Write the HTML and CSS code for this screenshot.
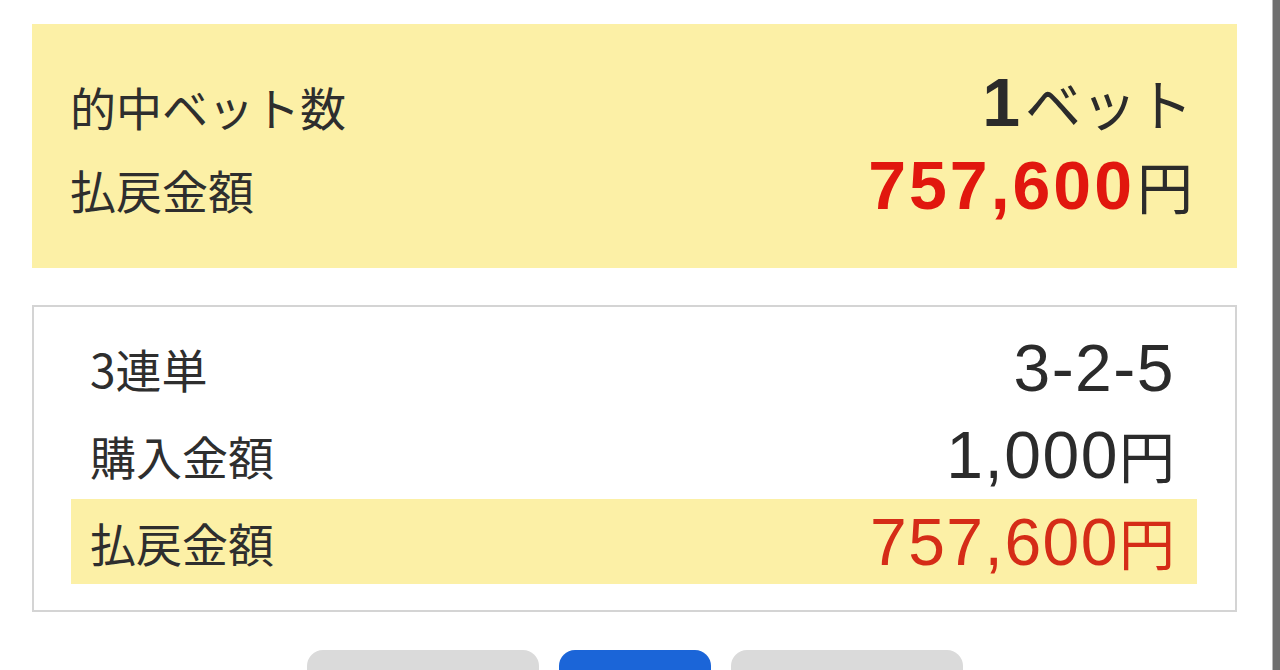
FILE: index.html
```html
<!DOCTYPE html>
<html lang="ja">
<head>
<meta charset="utf-8">
<title>的中結果</title>
<link rel="stylesheet" href="styles.css">
</head>
<body>
<div class="page">
  <main class="main">
    <section class="summary">
      <div class="row">
        <span class="label">的中ベット数</span>
        <span class="value"><b class="num-bold">1</b><span class="jp-big">ベット</span></span>
      </div>
      <div class="row">
        <span class="label">払戻金額</span>
        <span class="value"><b class="num-bold red">757,600</b><span class="jp-big">円</span></span>
      </div>
    </section>

    <section class="detail">
      <div class="drow">
        <span class="label">3連単</span>
        <span class="value"><span class="num">3-2-5</span></span>
      </div>
      <div class="drow">
        <span class="label">購入金額</span>
        <span class="value"><span class="num">1,000</span><span class="jp-big">円</span></span>
      </div>
      <div class="drow hl">
        <span class="label">払戻金額</span>
        <span class="value red2"><span class="num">757,600</span><span class="jp-big">円</span></span>
      </div>
    </section>

    <nav class="buttons">
      <button class="btn gray"></button>
      <button class="btn blue"></button>
      <button class="btn gray"></button>
    </nav>
  </main>
  <div class="edge"></div>
</div>
</body>
</html>
```
FILE: styles.css
```css
html, body {
  margin: 0;
  padding: 0;
  background: #ffffff;
  height: 100%;
  overflow: hidden;
}

.page {
  display: flex;
  height: 670px;
}

.main {
  flex: 1;
  padding: 24px 35px 0 32px;
  display: flex;
  flex-direction: column;
  background: #ffffff;
}

.edge {
  width: 7px;
  background: #6f6f6f;
  border-left: 1px solid #b9b9b9;
}

.label {
  font-family: "Noto Sans CJK JP", "Noto Sans", sans-serif;
  font-size: 46px;
  color: #2e2e2e;
  line-height: 1;
}

.value {
  display: flex;
  align-items: baseline;
  color: #2b2b2b;
  line-height: 1;
}

.jp-big {
  font-family: "Noto Sans CJK JP", "Noto Sans", sans-serif;
  font-size: 56px;
  font-weight: 400;
}

.num-bold {
  font-family: "Liberation Sans", Arial, sans-serif;
  font-weight: 700;
  font-size: 68px;
  letter-spacing: 3px;
  margin-right: 2px;
}

.num {
  font-family: "Liberation Sans", Arial, sans-serif;
  font-weight: 400;
  font-size: 66px;
  letter-spacing: 1.5px;
}

.red { color: #e1170e; }
.red2 { color: #d52c17; }

.summary {
  flex-shrink: 0;
  background: #fcf0a6;
  height: 244px;
  box-sizing: border-box;
  padding: 44px 44px 0 38px;
  display: flex;
  flex-direction: column;
}

.row {
  flex-shrink: 0;
  display: flex;
  justify-content: space-between;
  align-items: baseline;
  height: 83px;
}

.detail {
  flex-shrink: 0;
  margin-top: 37px;
  border: 2px solid #d4d4d4;
  height: 307px;
  box-sizing: border-box;
  padding: 17px 38px 0 37px;
  display: flex;
  flex-direction: column;
}

.drow {
  flex-shrink: 0;
  display: flex;
  justify-content: space-between;
  align-items: center;
  height: 87px;
  padding: 0 22px 0 19px;
}

.drow.hl {
  background: #fcf0a6;
  height: 85px;
  margin-top: 1px;
}

.buttons {
  flex-shrink: 0;
  margin-top: 38px;
  display: flex;
  justify-content: center;
  gap: 20px;
}

.btn {
  border: none;
  height: 20px;
  border-radius: 16px 16px 0 0;
  padding: 0;
}

.btn.gray {
  width: 232px;
  background: #dadada;
}

.btn.blue {
  width: 152px;
  background: #1b65d8;
}
```
